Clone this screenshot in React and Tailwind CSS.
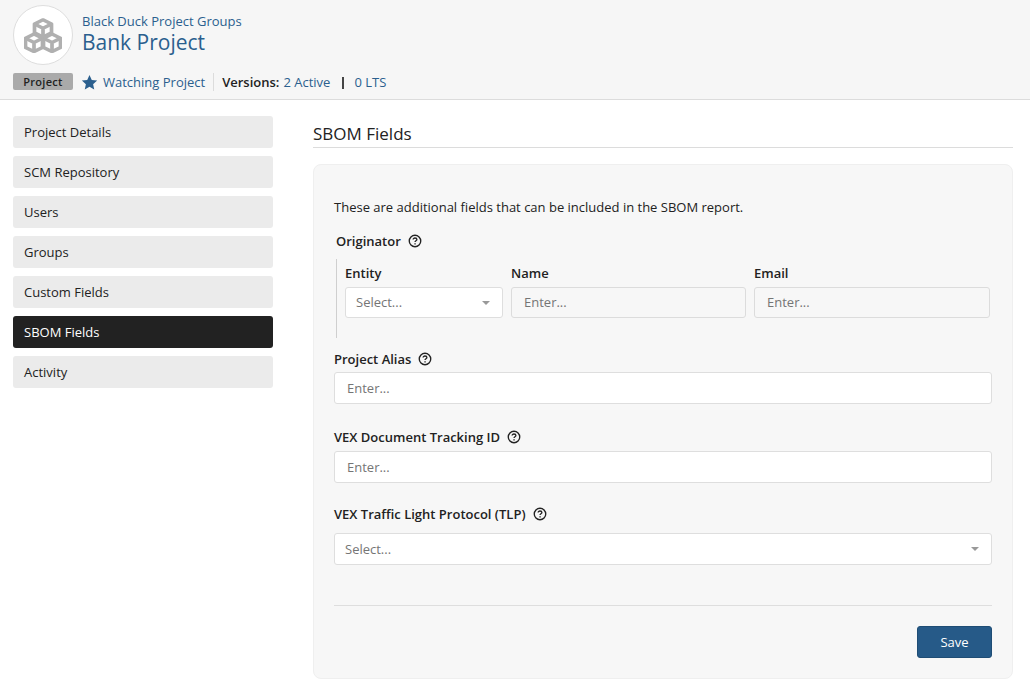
import { useState } from "react";

const navItems = [
  "Project Details",
  "SCM Repository",
  "Users",
  "Groups",
  "Custom Fields",
  "SBOM Fields",
  "Activity",
];

function HelpIcon() {
  return (
    <svg width="14" height="14" viewBox="0 0 14 14" fill="none" className="shrink-0">
      <circle cx="7" cy="7" r="5.75" stroke="#222" strokeWidth="1.35" />
      <path
        d="M5.1 5.6C5.1 4.6 5.9 4 7 4s1.9.6 1.9 1.5c0 1.3-1.9 1.3-1.9 2.6"
        stroke="#222"
        strokeWidth="1.3"
      />
      <rect x="6.4" y="9.2" width="1.3" height="1.3" fill="#222" />
    </svg>
  );
}

function CubesIcon() {
  return (
    <svg
      width="38"
      height="35"
      viewBox="0 0 38 38"
      preserveAspectRatio="none"
      fill="none"
      stroke="#b0b0b0"
      strokeWidth="3.7"
      strokeLinejoin="round"
    >
      <path d="M19 2l8.5 4.5v9.5L19 20.5 10.5 16V6.5z" />
      <path d="M10.5 6.5L19 11l8.5-4.5M19 11v9.5" />
      <path d="M10 17.5l8.5 4.5v10L10 36.5 1.5 32V22z" />
      <path d="M1.5 22l8.5 4.5 8.5-4.5M10 26.5v10" />
      <path d="M28 17.5l8.5 4.5v10L28 36.5 19.5 32V22z" />
      <path d="M19.5 22l8.5 4.5 8.5-4.5M28 26.5v10" />
    </svg>
  );
}

function SelectBox({ className }) {
  return (
    <div className={`flex items-center justify-between rounded-[3px] border border-[#dedede] bg-white pl-[10px] pr-[12px] text-[13px] text-[#757575] ${className}`}>
      <span className="pt-px">Select...</span>
      <span className="h-0 w-0 border-x-[4px] border-t-[4px] border-x-transparent border-t-[#999]" />
    </div>
  );
}

function TextBox({ disabled, className }) {
  return (
    <input
      disabled={disabled}
      placeholder="Enter..."
      className={`rounded-[3px] px-[12px] text-[13px] outline-none placeholder:text-[#757575] ${
        disabled ? "border-[1.5px] border-[#dcdcdc] bg-[#f7f7f7] pb-[2px]" : "border border-[#dedede] bg-white"
      } ${className}`}
    />
  );
}

function FieldLabel({ children, className }) {
  return (
    <div className={`flex items-center gap-[7px] text-[13px] leading-[18px] font-semibold text-[#222] ${className}`}>
      {children}
      <HelpIcon />
    </div>
  );
}

export default function App() {
  const [active] = useState("SBOM Fields");

  return (
    <div className="min-h-[687px] bg-white font-['Open_Sans',sans-serif] text-[13px] text-[#222]">
      <header className="h-[100px] border-b border-[#dcdcdc] bg-[#f6f6f6] px-[13px] pt-[5px]">
        <div className="flex items-start gap-[9px]">
          <div className="flex h-[60px] w-[60px] items-center justify-center rounded-full border border-[#dedede] bg-white">
            <CubesIcon />
          </div>
          <div className="pt-[7px]">
            <div className="text-[13px] leading-[19px] text-[#2b5f8e]">Black Duck Project Groups</div>
            <div className="text-[21px] leading-[22px] text-[#2b5f8e]">Bank Project</div>
          </div>
        </div>
        <div className="mt-[9px] flex h-[18px] items-center">
          <span className="-mt-px flex h-[17px] w-[60px] items-center justify-center self-start rounded-[2px] bg-[#aaaaaa] pt-px text-[11px] font-semibold tracking-[0.3px] text-[#222]">
            Project
          </span>
          <svg width="17" height="17" viewBox="0 0 24 24" fill="#2b5f8e" className="ml-[8px] -mt-px">
            <path d="M12 1.5l3.2 7 7.6.8-5.7 5.1 1.6 7.6L12 18.1 5.3 22l1.6-7.6L1.2 9.3l7.6-.8z" />
          </svg>
          <span className="ml-[5px] text-[#2b5f8e]">Watching Project</span>
          <span className="mx-[8px] -mt-px h-[18px] w-px self-start bg-[#dcdcdc]" />
          <span className="font-semibold">Versions:</span>
          <span className="ml-[4px] text-[#2b5f8e]">2 Active</span>
          <span className="ml-[12px] h-[12px] w-[2px] bg-[#444]" />
          <span className="ml-[10px] text-[#2b5f8e]">0 LTS</span>
        </div>
      </header>

      <div className="flex gap-[40px] px-[13px] pt-[16px]">
        <nav className="flex w-[260px] shrink-0 flex-col gap-[8px]">
          {navItems.map((item) => (
            <div
              key={item}
              className={`flex h-[32px] items-center rounded-[3px] px-[11px] pt-px text-[13px] ${
                item === active ? "bg-[#222222] text-white" : "bg-[#ebebeb] text-[#222]"
              }`}
            >
              {item}
            </div>
          ))}
        </nav>

        <main className="w-[700px]">
          <h2 className="h-[32px] border-b border-[#dcdcdc] pt-[5px] text-[17px] leading-[26px] text-[#222]">
            SBOM Fields
          </h2>
          <div className="mt-[16px] h-[515px] rounded-[8px] border border-[#efefef] bg-[#f7f7f7] px-[20px] pt-[33px]">
            <p className="leading-[18px]">These are additional fields that can be included in the SBOM report.</p>

            <FieldLabel className="mt-[16px] ml-[2px]">Originator</FieldLabel>
            <div className="mt-[9px] ml-[2px] h-[79px] border-l border-[#cfcfcf] pl-[8px] pt-[5px]">
              <div className="flex gap-[8px]">
                <div className="w-[158px]">
                  <div className="text-[13px] leading-[18px] font-semibold">Entity</div>
                  <SelectBox className="mt-[5px] h-[31px]" />
                </div>
                <div className="w-[235px]">
                  <div className="text-[13px] leading-[18px] font-semibold">Name</div>
                  <TextBox disabled className="mt-[5px] h-[31px] w-full" />
                </div>
                <div className="w-[236px]">
                  <div className="text-[13px] leading-[18px] font-semibold">Email</div>
                  <TextBox disabled className="mt-[5px] h-[31px] w-full" />
                </div>
              </div>
            </div>

            <FieldLabel className="mt-[12px]">Project Alias</FieldLabel>
            <TextBox className="mt-[4px] block h-[32px] w-full" />

            <FieldLabel className="mt-[24px]">VEX Document Tracking ID</FieldLabel>
            <TextBox className="mt-[5px] block h-[32px] w-full" />

            <FieldLabel className="mt-[22px]">VEX Traffic Light Protocol (TLP)</FieldLabel>
            <SelectBox className="mt-[10px] h-[32px]" />

            <div className="mt-[40px] border-t border-[#dedede]" />
            <div className="mt-[20px] flex justify-end">
              <button className="h-[32px] w-[75px] rounded-[3px] border border-[#1f4d75] bg-[#265a88] pt-px text-[13px] text-white">
                Save
              </button>
            </div>
          </div>
        </main>
      </div>
    </div>
  );
}
